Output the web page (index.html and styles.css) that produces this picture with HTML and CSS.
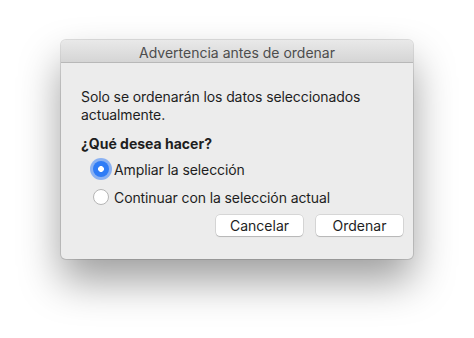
FILE: index.html
```html
<!DOCTYPE html>
<html lang="es">

<head>
  <meta charset="UTF-8">
  <title>Advertencia antes de ordenar</title>
  <link rel="stylesheet" href="styles.css">
</head>

<body>
  <div class="dialog">
    <!-- Title bar -->
    <div class="titlebar">Advertencia antes de ordenar</div>

    <div class="content">
      <p class="message">Solo se ordenarán los datos seleccionados actualmente.</p>
      <p class="question">¿Qué desea hacer?</p>

      <div class="options">
        <label class="option">
          <input type="radio" name="sortMode" value="expand" checked>
          <span class="radio focused"></span>
          Ampliar la selección
        </label>
        <label class="option">
          <input type="radio" name="sortMode" value="current">
          <span class="radio"></span>
          Continuar con la selección actual
        </label>
      </div>

      <div class="actions">
        <button>Cancelar</button>
        <button>Ordenar</button>
      </div>
    </div>
  </div>
</body>

</html>
```

FILE: styles.css
```css
body {
  margin: 0;
  width: 474px;
  height: 338px;
  background-color: #ffffff;
  font-family: Inter, "Liberation Sans", sans-serif;
  color: #1e1e1e;
  overflow: hidden;
}

.dialog {
  width: 352px;
  margin: 40px 0 0 61px;
  background-color: #ececec;
  border-radius: 5px;
  box-shadow: 0 0 0 1px rgba(0, 0, 0, 0.12), 0 22px 42px rgba(0, 0, 0, 0.38);
  overflow: hidden;
}

.titlebar {
  height: 23px;
  padding-top: 1px;
  box-sizing: border-box;
  line-height: 23px;
  text-align: center;
  font-size: 14px;
  color: #4d4d4d;
  background: linear-gradient(#e9e9e9, #d5d5d5);
  border-bottom: 1px solid #b8b8b8;
}

.content {
  padding: 25px 10px 23px 20px;
}

.message {
  margin: 0;
  font-size: 14px;
  line-height: 18px;
  letter-spacing: -0.1px;
  padding-right: 30px;
}

.question {
  margin: 11px 0 0;
  font-size: 14px;
  font-weight: 700;
  line-height: 18px;
}

.options {
  margin-top: 2px;
  padding-left: 12px;
}

.option {
  display: flex;
  align-items: center;
  height: 28px;
  font-size: 14px;
  letter-spacing: -0.1px;
}

.option input {
  display: none;
}

.radio {
  width: 16px;
  height: 16px;
  box-sizing: border-box;
  border-radius: 50%;
  border: 1px solid #b5b5b5;
  background-color: #ffffff;
  margin-right: 5px;
}

.option input:checked + .radio {
  border: none;
  background-color: #2f7cf6;
  background-image: radial-gradient(circle, #ffffff 2.6px, transparent 3.2px);
}

.radio.focused {
  box-shadow: 0 0 0 3px rgba(58, 130, 247, 0.55);
}

.actions {
  display: flex;
  justify-content: flex-end;
  gap: 13px;
  margin-top: 4px;
}

.actions button {
  width: 87px;
  height: 21px;
  padding: 0;
  font-family: inherit;
  font-size: 14px;
  color: #1e1e1e;
  background-color: #ffffff;
  border: none;
  border-radius: 4px;
  box-shadow: 0 0 0 0.5px rgba(0, 0, 0, 0.18), 0 1px 1px rgba(0, 0, 0, 0.15);
}
```
